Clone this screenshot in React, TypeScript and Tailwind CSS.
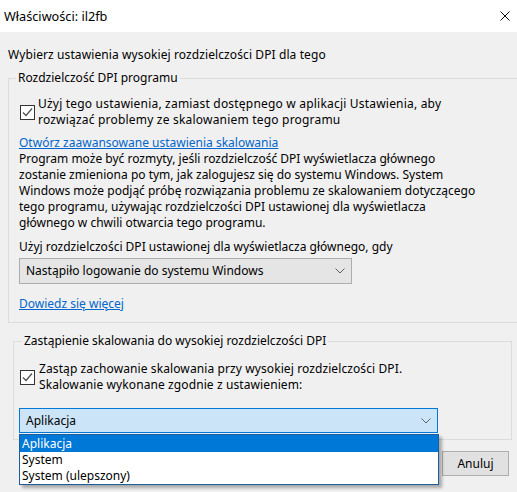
import React from 'react';

function CheckBox() {
  return (
    <div className="w-[15px] h-[15px] shrink-0 border border-[#333333] bg-white flex items-center justify-center">
      <svg width="11" height="11" viewBox="0 0 11 11">
        <polyline points="1,5.5 4,8.5 10,1.5" fill="none" stroke="#4d4d4d" strokeWidth="1.2" />
      </svg>
    </div>
  );
}

function Chevron() {
  return (
    <svg width="10" height="6" viewBox="0 0 10 6">
      <polyline points="0.5,0.5 5,5 9.5,0.5" fill="none" stroke="#606060" strokeWidth="1" />
    </svg>
  );
}

export default function App() {
  return (
    <div className="w-[517px] h-[492px] overflow-hidden bg-[#f0f0f0] text-black text-[12px] leading-[16px] font-['Noto_Sans',sans-serif]">
      {/* Title bar */}
      <div className="h-[32px] bg-white flex items-center justify-between pl-[4px] pr-[7px]">
        <span className="text-[12.7px]">Właściwości: il2fb</span>
        <svg width="10" height="10" viewBox="0 0 10 10">
          <path d="M0.5 0.5 L9.5 9.5 M9.5 0.5 L0.5 9.5" stroke="#111" strokeWidth="1" />
        </svg>
      </div>

      <div className="pl-[8px] pt-[15px]">
        <p className="tracking-[0.1px]">Wybierz ustawienia wysokiej rozdzielczości DPI dla tego</p>

        {/* Group 1 */}
        <fieldset className="mt-[7px] w-[530px] border border-[#dcdcdc] pl-[10px] pb-[10px]">
          <legend className="ml-[-3px] px-[2px]">Rozdzielczość DPI programu</legend>
          <div className="mt-[10px] ml-[1px] flex items-center gap-[3px]">
            <CheckBox />
            <div className="tracking-[0.2px]">
              Użyj tego ustawienia, zamiast dostępnego w aplikacji Ustawienia, aby
              <br />
              rozwiązać problemy ze skalowaniem tego programu
            </div>
          </div>
          <a className="block mt-[7px] text-[#0066cc] underline w-fit">Otwórz zaawansowane ustawienia skalowania</a>
          <p>
            Program może być rozmyty, jeśli rozdzielczość DPI wyświetlacza głównego
            <br />
            zostanie zmieniona po tym, jak zalogujesz się do systemu Windows. System
            <br />
            Windows może podjąć próbę rozwiązania problemu ze skalowaniem dotyczącego
            <br />
            tego programu, używając rozdzielczości DPI ustawionej dla wyświetlacza
            <br />
            głównego w chwili otwarcia tego programu.
          </p>
          <p className="mt-[8px]">Użyj rozdzielczości DPI ustawionej dla wyświetlacza głównego, gdy</p>
          <div className="mt-[3px] w-[333px] h-[26px] border border-[#adadad] bg-[#e5e5e5] flex items-center justify-between pl-[6px] pr-[6px]">
            <span>Nastąpiło logowanie do systemu Windows</span>
            <Chevron />
          </div>
          <a className="block mt-[12px] text-[#0066cc] underline w-fit">Dowiedz się więcej</a>
        </fieldset>

        {/* Group 2 */}
        <fieldset className="mt-[10px] ml-[5px] w-[499px] border border-[#dcdcdc] pl-[5px] pb-[6px]">
          <legend className="ml-[3px] px-[2px]">Zastąpienie skalowania do wysokiej rozdzielczości DPI</legend>
          <div className="mt-[12px] ml-[1px] flex items-center gap-[4px]">
            <CheckBox />
            <div className="tracking-[0.1px]">
              Zastąp zachowanie skalowania przy wysokiej rozdzielczości DPI.
              <br />
              Skalowanie wykonane zgodnie z ustawieniem:
            </div>
          </div>
          <div className="relative mt-[15px] w-[419px]">
            <div className="h-[25px] border border-[#0078d7] bg-[#cce4f7] flex items-center justify-between pl-[6px] pr-[6px]">
              <span>Aplikacja</span>
              <Chevron />
            </div>
            {/* open list */}
            <div className="absolute left-0 top-[26px] z-10 w-[420px] border border-[#1c5d9c] bg-white shadow-[3px_3px_3px_rgba(0,0,0,0.3)]">
              <div className="h-[17px] bg-[#0078d7] text-white pl-[2px] leading-[17px]">Aplikacja</div>
              <div className="h-[16px] pl-[2px]">System</div>
              <div className="h-[16px] pl-[2px]">System (ulepszony)</div>
            </div>
          </div>
        </fieldset>

        {/* Buttons */}
        <div className="mt-[11px] pr-[8px] flex justify-end gap-[13px]">
          <button className="w-[67px] h-[25px] border border-[#adadad] bg-[#e1e1e1]">OK</button>
          <button className="w-[67px] h-[25px] border border-[#adadad] bg-[#e1e1e1]">Anuluj</button>
        </div>
      </div>
    </div>
  );
}
